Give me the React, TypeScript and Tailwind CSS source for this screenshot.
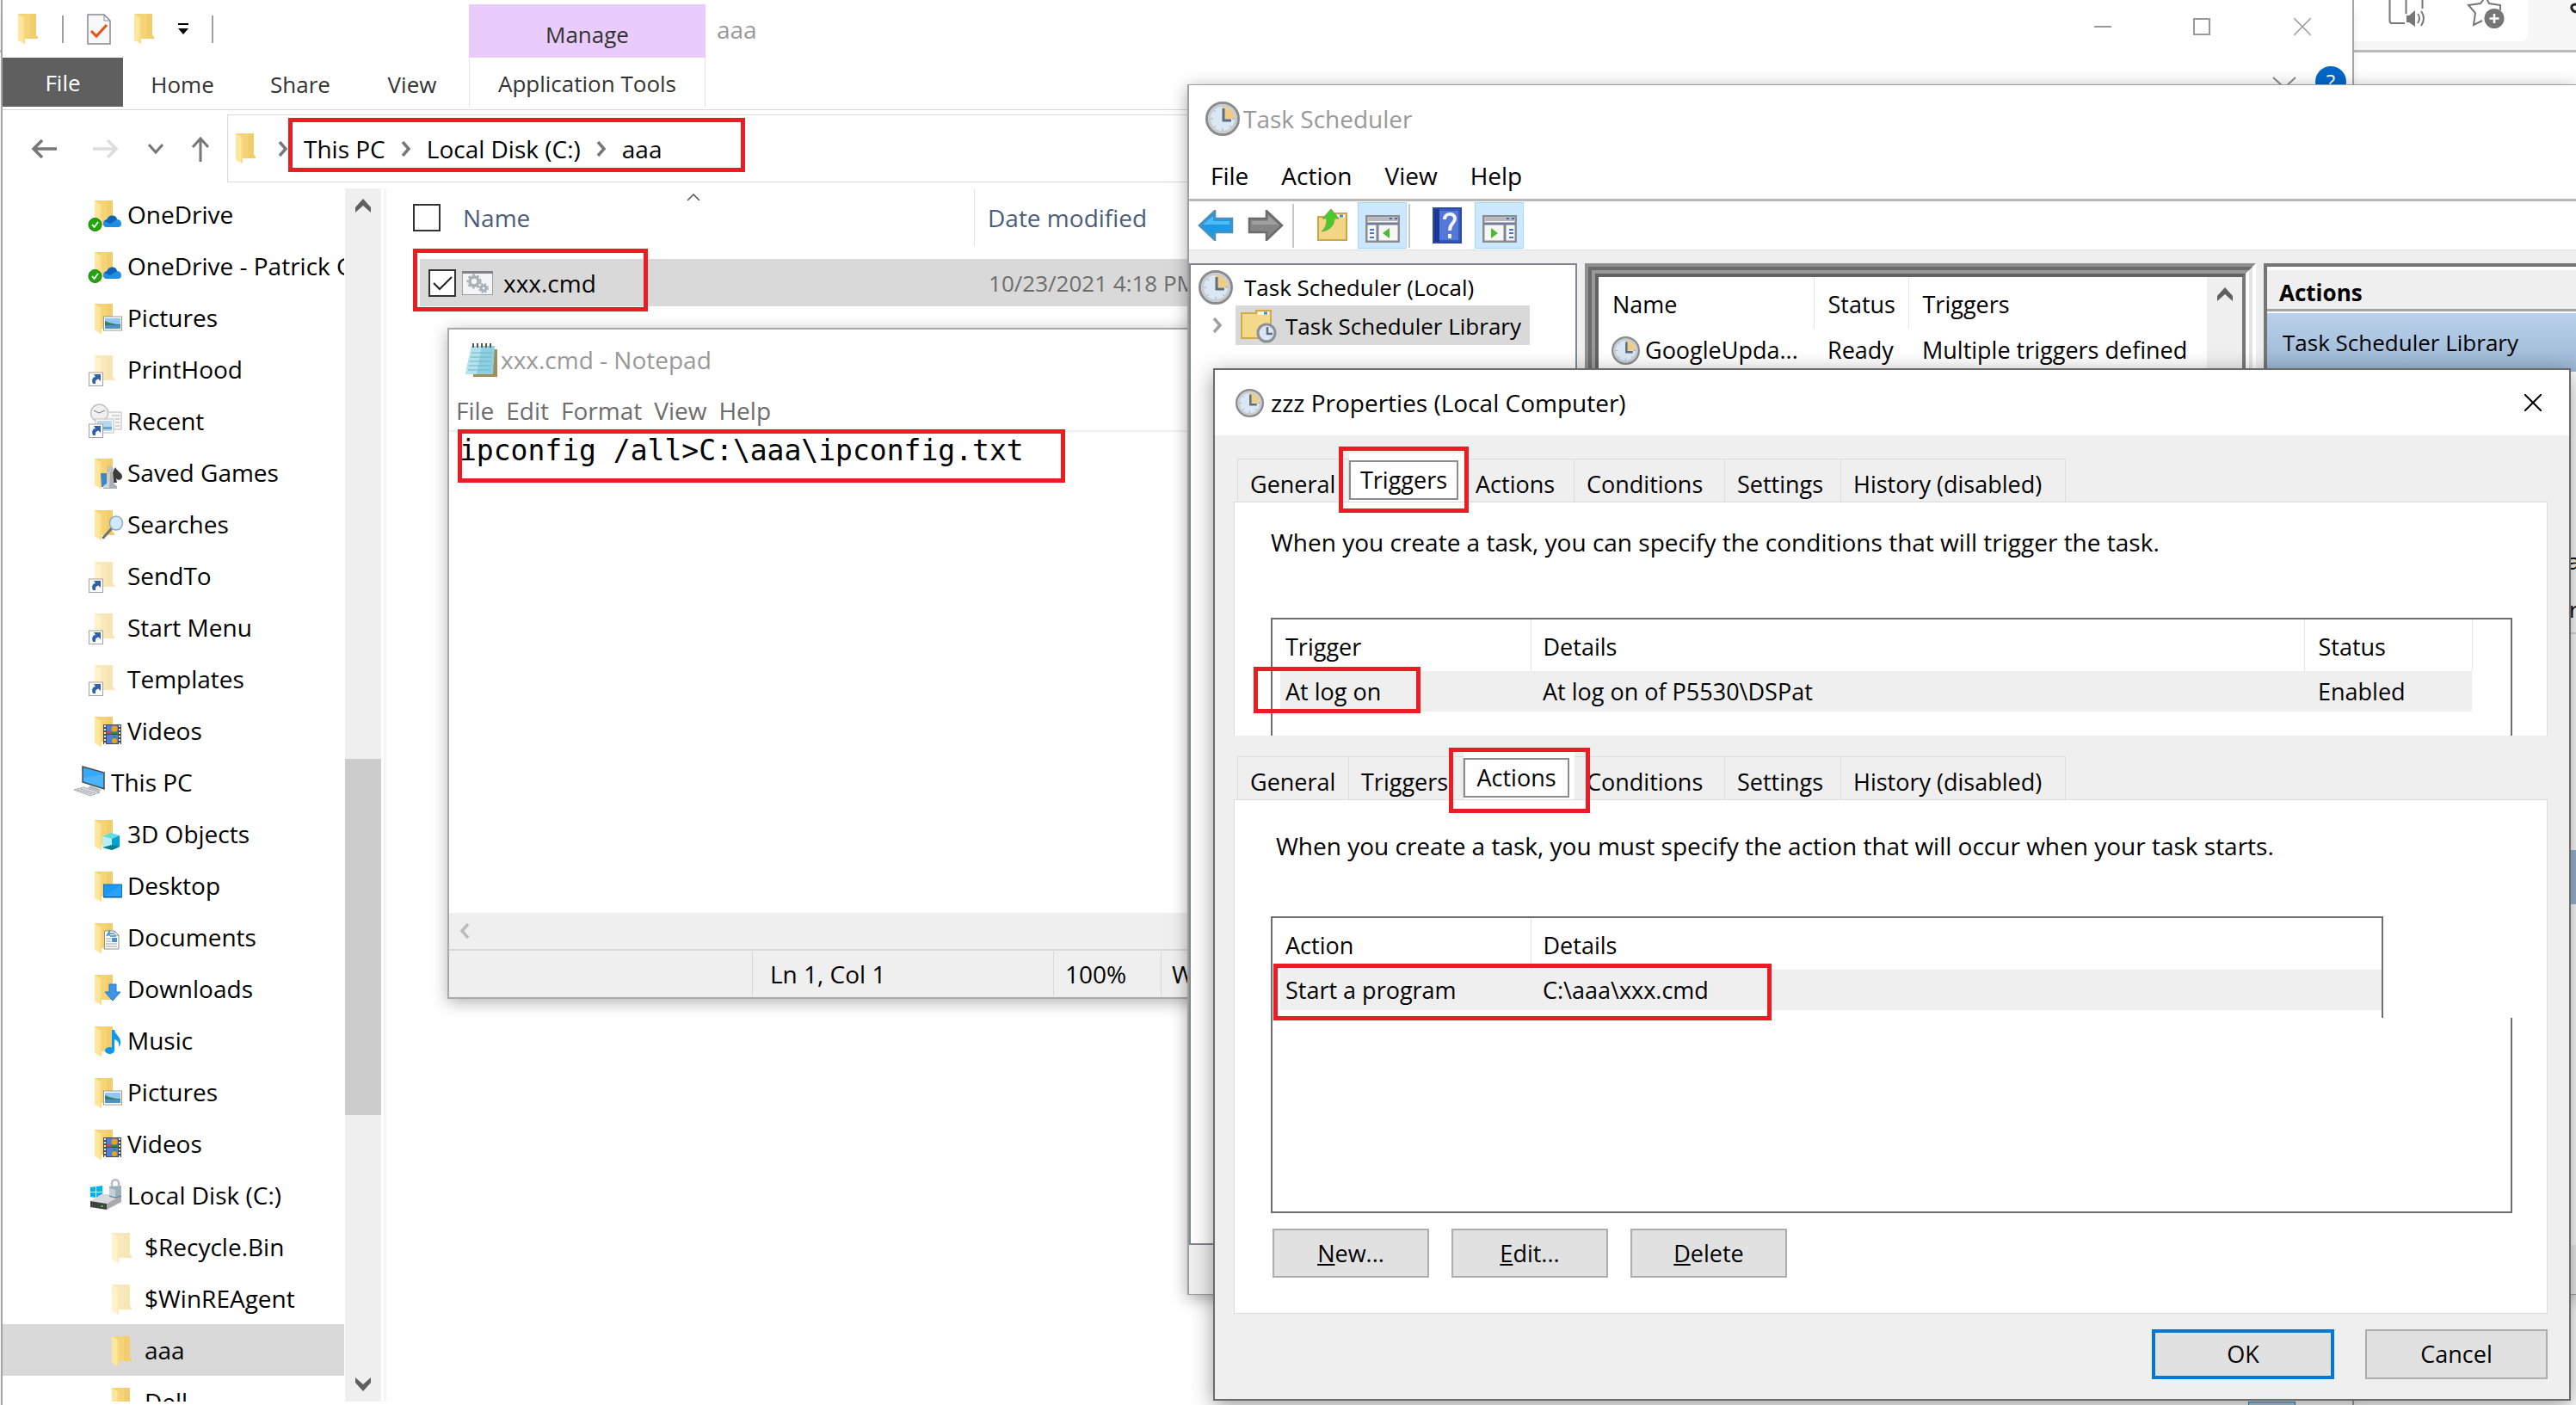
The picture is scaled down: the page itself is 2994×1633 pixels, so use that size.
import { useState, type ReactNode } from "react";

type NavItem = {
  id: string;
  label: string;
  icon: string;
  level: 0 | 1 | 2;
};

const navItems: NavItem[] = [
  { id: "onedrive", label: "OneDrive", icon: "onedrive", level: 1 },
  { id: "onedrive-work", label: "OneDrive - Patrick G", icon: "onedrive", level: 1 },
  { id: "pictures", label: "Pictures", icon: "pictures", level: 1 },
  { id: "printhood", label: "PrintHood", icon: "link", level: 1 },
  { id: "recent", label: "Recent", icon: "recent", level: 1 },
  { id: "saved-games", label: "Saved Games", icon: "games", level: 1 },
  { id: "searches", label: "Searches", icon: "searches", level: 1 },
  { id: "sendto", label: "SendTo", icon: "link", level: 1 },
  { id: "start-menu", label: "Start Menu", icon: "link", level: 1 },
  { id: "templates", label: "Templates", icon: "link", level: 1 },
  { id: "videos", label: "Videos", icon: "videos", level: 1 },
  { id: "this-pc", label: "This PC", icon: "pc", level: 0 },
  { id: "pc-3d", label: "3D Objects", icon: "cube", level: 1 },
  { id: "pc-desktop", label: "Desktop", icon: "desktop", level: 1 },
  { id: "pc-documents", label: "Documents", icon: "documents", level: 1 },
  { id: "pc-downloads", label: "Downloads", icon: "downloads", level: 1 },
  { id: "pc-music", label: "Music", icon: "music", level: 1 },
  { id: "pc-pictures", label: "Pictures", icon: "pictures", level: 1 },
  { id: "pc-videos", label: "Videos", icon: "videos", level: 1 },
  { id: "disk-c", label: "Local Disk (C:)", icon: "disk", level: 1 },
  { id: "recycle", label: "$Recycle.Bin", icon: "faded", level: 2 },
  { id: "winre", label: "$WinREAgent", icon: "faded", level: 2 },
  { id: "aaa", label: "aaa", icon: "folder", level: 2 },
  { id: "dell", label: "Dell", icon: "folder", level: 2 },
];

const levelPadding = {
  0: "pl-[82px]",
  1: "pl-[101px]",
  2: "pl-[121px]",
};

const tabs = [
  { label: "General", width: "w-[130px]" },
  { label: "Triggers", width: "w-[133px]" },
  { label: "Actions", width: "w-[129px]" },
  { label: "Conditions", width: "w-[175px]" },
  { label: "Settings", width: "w-[135px]" },
  { label: "History (disabled)", width: "w-[261px]" },
];

// Callouts drawn over the windows
const callouts = [
  "left-[335px] top-[137px] h-[63px] w-[531px]",
  "left-[480px] top-[289px] h-[73px] w-[273px]",
  "left-[532px] top-[499px] h-[62px] w-[706px]",
  "left-[1556px] top-[519px] h-[77px] w-[151px]",
  "left-[1457px] top-[775px] h-[54px] w-[194px]",
  "left-[1684px] top-[869px] h-[76px] w-[164px]",
  "left-[1480px] top-[1120px] h-[66px] w-[579px]",
];

function FolderShape({ faded = false }: { faded?: boolean }) {
  return (
    <g opacity={faded ? 0.5 : 1}>
      <path d="M6 4H27V29L29 31V33H14L6 35Z" fill="#f5d478" />
      <path d="M20 4H27V29L29 31V33H20Z" fill="#efc962" opacity="0.6" />
      <path d="M6 4L14 9V39L6 35Z" fill="#ffe69d" />
      <path d="M12 8L14 9V39L12 38Z" fill="#fbdc84" />
    </g>
  );
}

function ShortcutBadge() {
  return (
    <g>
      <rect x="-0.5" y="24" width="16" height="15.5" fill="#fff" stroke="#a3a3a3" />
      <path d="M4 37C2 32 4 29 7 29L5 26H13V34L10.500 31.500C7.500 32 6.500 34 7 37Z" fill="#2f62a8" />
    </g>
  );
}

function SmallFolder() {
  return (
    <svg viewBox="6 4 24 35" className="h-[35px] w-6 shrink-0">
      <FolderShape />
    </svg>
  );
}

function NavIcon({ icon }: { icon: string }) {
  const plain = ["pc", "disk", "recent"].includes(icon);
  return (
    <svg viewBox="0 0 40 40" className="h-10 w-10 shrink-0 overflow-visible">
      {!plain && <FolderShape faded={icon === "link" || icon === "faded"} />}
      {icon === "onedrive" && (
        <g>
          <path
            d="M16 31C16 27 19 26 21 26C22 21 30 20 32 26C36 26 37 29 37 31C37 34 35 35 33 35H20C17 35 16 33 16 31Z"
            fill="#1f8fe6"
          />
          <path d="M20 26.500C22 20 31 20 32 26L24 31L17 28Z" fill="#0f63b8" />
          <circle cx="6.500" cy="32" r="7.500" fill="#22a40f" stroke="#178207" />
          <path d="M3 32L5.500 35L10 29" stroke="#fff" strokeWidth="1.800" fill="none" />
        </g>
      )}
      {icon === "link" && <ShortcutBadge />}
      {icon === "pictures" && (
        <g>
          <rect x="16.500" y="19" width="21" height="16" fill="#fff" stroke="#9a9a9a" />
          <rect x="18" y="21" width="18" height="12" fill="#8ec7f5" />
          <path d="M18 24C23 26 28 28 36 28V30H18Z" fill="#3b7d6a" />
          <rect x="18" y="29" width="18" height="4" fill="#4f93c5" />
        </g>
      )}
      {icon === "recent" && (
        <g>
          <rect x="19" y="10" width="18" height="20" fill="#f7f7f7" stroke="#bdbdbd" />
          <path d="M26 14H35M30 18H35M30 22H35M30 26H35" stroke="#b0b0b0" />
          <circle cx="11.500" cy="11" r="10" fill="#f0f0f0" stroke="#c2c2c2" strokeWidth="1.500" />
          <path d="M5 8L11 11L18 8" stroke="#777" fill="none" />
          <rect x="7" y="18" width="21" height="16" fill="#fff" stroke="#bdbdbd" />
          <rect x="9" y="20" width="17" height="12" fill="#b9d9f2" />
          <rect x="9" y="27" width="17" height="3" fill="#6fa5cf" />
          <ShortcutBadge />
        </g>
      )}
      {icon === "games" && (
        <g>
          <path d="M13 21H20V37H14Z" fill="#3e86cc" />
          <path d="M30 14C33 20 38 20 38 25C38 29 33 30 31 27L32 32H28L27 20Z" fill="#3c3c3c" />
          <circle cx="24" cy="17" r="4" fill="#b9c1c7" />
          <path d="M22 20H26L28 33L32 36V39H16V36L20 33Z" fill="#a4afb6" />
          <path d="M22 20H24L23 38H16V36L20 33Z" fill="#cfd6da" />
        </g>
      )}
      {icon === "searches" && (
        <g>
          <path d="M16 36L25 26" stroke="#6d7378" strokeWidth="3" strokeLinecap="round" />
          <ellipse cx="31" cy="19" rx="7.500" ry="8" fill="#cfeafc" stroke="#8fa9bb" strokeWidth="1.500" />
        </g>
      )}
      {icon === "videos" && (
        <g>
          <rect x="16" y="13" width="21" height="23" fill="#4a4a4a" />
          <path d="M18 14V36M35 14V36" stroke="#e8e8e8" strokeWidth="2" strokeDasharray="2 2" />
          <rect x="20" y="14" width="13" height="10" fill="#4d7ee0" />
          <rect x="20" y="25" width="13" height="10" fill="#4d7ee0" />
          <path d="M20 22H33V24H20ZM28 25L31 28L28 31Z" fill="#2e8b35" />
          <circle cx="29" cy="18" r="3.500" fill="#e8a50f" />
          <circle cx="29" cy="32" r="3" fill="#e8a50f" />
          <circle cx="23" cy="22" r="2" fill="#e23b52" />
        </g>
      )}
      {icon === "pc" && (
        <g>
          <path d="M11 2L36 9V28L11 20Z" fill="#35a8fa" stroke="#4b4b4b" strokeWidth="1.500" />
          <path d="M12 15L35 11V26L12 19Z" fill="#5bbcff" opacity="0.6" />
          <path d="M20 24L33 29L30 31L17 27Z" fill="#b5bbc0" />
          <path d="M1 29L12 26L31 32L20 36Z" fill="#dfe2e5" stroke="#a7adb2" />
          <path d="M5 29L22 34M9 28L26 33" stroke="#8b9196" strokeDasharray="2 1" />
        </g>
      )}
      {icon === "cube" && (
        <g>
          <path d="M15 23L25 19L35 22L26 26Z" fill="#5fdbe4" />
          <path d="M15 23L26 26V39L15 36Z" fill="#b9eff2" />
          <path d="M35 22L26 26V39L35 35Z" fill="#00a3d9" />
          <path d="M15 36L26 33L35 35L26 39Z" fill="#057f8d" />
        </g>
      )}
      {icon === "desktop" && (
        <g>
          <rect x="16.500" y="19" width="21" height="15" fill="#1b98f5" stroke="#1573bd" />
          <path d="M17 33L37 19V34H17Z" fill="#39aaff" opacity="0.5" />
          <path d="M17 33.500H37" stroke="#0b4f8c" />
        </g>
      )}
      {icon === "documents" && (
        <g>
          <path d="M17.500 13H29L34 18V34H17.500Z" fill="#fff" stroke="#8f8f8f" />
          <path d="M29 13V18H34" fill="none" stroke="#8f8f8f" />
          <path d="M20 19L23 14V19M24 16H28M24 19H31" stroke="#2e8ed1" strokeWidth="1.500" fill="none" />
          <path d="M19 22H25M19 25H25M19 28H32M19 31H32" stroke="#9b9b9b" />
          <rect x="26" y="21" width="6" height="5" fill="#4f93c5" />
        </g>
      )}
      {icon === "downloads" && (
        <path d="M23 15H31V24H36L27 34L18 24H23Z" fill="#3d95e8" stroke="#2877c4" />
      )}
      {icon === "music" && (
        <g>
          <path d="M26 8H29C30 14 37 16 36 24C35 27 34 28 34 28C35 22 32 20 29 19V32H26Z" fill="#0b98f3" />
          <ellipse cx="23.500" cy="32" rx="5.500" ry="4" fill="#0b98f3" />
        </g>
      )}
      {icon === "disk" && (
        <g>
          <path d="M1 11L7 10V16H1ZM8 10L15 9V16H8ZM1 17H7V23L1 22ZM8 17H15V24L8 23Z" fill="#00b4f1" />
          <path d="M1 27L14 19H37L20 30Z" fill="#d9dadb" />
          <path d="M1 27L20 30V37L1 34Z" fill="#3f4244" />
          <path d="M20 30L37 20V28L20 37Z" fill="#a8abad" />
          <path d="M13 33H16" stroke="#36c326" strokeWidth="2" />
          <path d="M26 11V6C26 1 34 1 34 6V9" stroke="#b5bdc3" strokeWidth="2.500" fill="none" />
          <path d="M23 10L37 9V22L30 24L23 22Z" fill="#9fb0bb" />
          <path d="M23 12L30 14V24L23 22Z" fill="#c5d1d9" />
          <path d="M23 21L30 23L37 21" stroke="#3e7da8" fill="none" />
        </g>
      )}
    </svg>
  );
}

function ClockIcon({ className }: { className: string }) {
  return (
    <svg viewBox="0 0 40 40" className={className}>
      <circle cx="20" cy="20" r="18.500" fill="#dbe8f4" stroke="#8b8b8b" strokeWidth="3" />
      <circle cx="20" cy="20" r="15.500" fill="none" stroke="#c9cdd1" strokeWidth="3" />
      <path d="M20 20V6A14 14 0 0 1 34 20Z" fill="#f0cd86" />
      <path d="M20 34V31M6 20H9M31 20H34M10 10L12 12M10 30L12 28M30 30L28 28" stroke="#9aa9b8" />
      <path d="M21 8V22H30" fill="none" stroke="#5c6e82" strokeWidth="3" />
    </svg>
  );
}

function Chevron({ className }: { className: string }) {
  return (
    <svg viewBox="0 0 12 18" className={className} fill="none" stroke="currentColor" strokeWidth="3.500">
      <path d="M2 1L9 9L2 17" />
    </svg>
  );
}

function ScrollArrow({ down = false }: { down?: boolean }) {
  return (
    <svg viewBox="0 0 18 16" className="h-4 w-[18px] fill-[#606060]">
      {down ? <path d="M0 0L9 8L18 0V6L9 16L0 6Z" /> : <path d="M0 16L9 8L18 16V10L9 0L0 10Z" />}
    </svg>
  );
}

function CheckBox({ label, checked, onToggle }: { label: string; checked: boolean; onToggle: () => void }) {
  return (
    <span className="grid h-8 w-8 shrink-0">
      <input
        type="checkbox"
        aria-label={label}
        checked={checked}
        onChange={onToggle}
        className="col-start-1 row-start-1 h-8 w-8 appearance-none border-2 border-[#333] bg-white"
      />
      {checked && (
        <svg viewBox="0 0 32 32" className="pointer-events-none col-start-1 row-start-1 h-8 w-8" fill="none">
          <path d="M6 16L13 23L27 9" stroke="#222" strokeWidth="2" />
        </svg>
      )}
    </span>
  );
}

function BrowserBackdrop() {
  return (
    <div className="flex min-h-screen flex-col bg-white">
      <div className="flex h-[61px] justify-end border-b-[3px] border-[#bbb] bg-[#f7f7f7]">
        <div className="flex h-12 w-[300px] justify-end gap-[47px] rounded-br-lg bg-white pr-[27px]">
          <svg viewBox="0 0 44 33" className="h-[33px] w-11" fill="none" stroke="#767676" strokeWidth="2">
            <path d="M1.500 0V24Q1.500 27 4 27H19M20.500 0V16M39.500 0V10" />
            <path d="M21 18H24L31 12V31L24 26H21Z" fill="#767676" stroke="none" />
            <path d="M34 16Q38 21 34 27M38 13Q44 21 38 30" />
          </svg>
          <svg viewBox="0 0 44 33" className="h-[33px] w-11" fill="none" stroke="#767676" strokeWidth="2">
            <path d="M39 12V6L26 4L22 -4L16 4L2 6L10 15L8 29L18 24" />
            <circle cx="32" cy="21.500" r="11.500" fill="#767676" stroke="none" />
            <path d="M32 16V27M26.500 21.500H37.500" stroke="#fff" strokeWidth="2.500" />
          </svg>
        </div>
        <div className="w-14">
          <svg viewBox="0 0 56 20" className="h-5 w-14" fill="none" stroke="#222" strokeWidth="3">
            <path d="M56 5Q50 5 51 10Q52 13 56 14" />
          </svg>
        </div>
      </div>
    </div>
  );
}

function ExplorerWindow() {
  const [selectedId, setSelectedId] = useState("aaa");
  const [allChecked, setAllChecked] = useState(false);
  const [fileChecked, setFileChecked] = useState(true);

  return (
    <section className="absolute inset-y-0 left-px right-[258px] flex flex-col border-x-2 border-[#a5a5a5] bg-white shadow-lg">
      <header className="flex h-[67px] shrink-0 text-[26px]">
        <div className="flex w-[542px] items-center gap-[27px] pl-[18px]">
          <SmallFolder />
          <span className="h-8 w-0.5 bg-[#a0a0a0]" />
          <svg viewBox="0 0 28 36" className="h-9 w-7">
            <path d="M1 1H20L27 8V35H1Z" fill="#f8f8fa" stroke="#8a8a8a" strokeWidth="1.500" />
            <path d="M20 1V8H27" fill="none" stroke="#8a8a8a" />
            <path d="M5 20L11 26L23 13" fill="none" stroke="#f0500f" strokeWidth="3" />
          </svg>
          <SmallFolder />
          <svg viewBox="0 0 12 14" className="h-3.5 w-3">
            <path d="M0 0H12V2H0ZM0 6H12L6 13Z" />
          </svg>
          <span className="h-8 w-0.5 bg-[#a0a0a0]" />
        </div>
        <div className="mt-[5px] flex w-[275px] items-center justify-center bg-[#e9cbfc] pt-2 text-[#333]">
          Manage
        </div>
        <h1 className="flex flex-1 items-center pl-[13px] text-[28px] text-[#999]">aaa</h1>
        <div className="flex items-start pr-12 pt-[21px]">
          <button aria-label="Minimize" className="w-[115px]">
            <svg viewBox="0 0 20 20" className="h-5 w-5" stroke="#999" strokeWidth="2">
              <path d="M0 10H20" />
            </svg>
          </button>
          <button aria-label="Maximize" className="w-[117px]">
            <svg viewBox="0 0 20 20" className="h-5 w-5" fill="none" stroke="#999" strokeWidth="2">
              <path d="M1 1H19V19H1Z" />
            </svg>
          </button>
          <button aria-label="Close">
            <svg viewBox="0 0 20 20" className="h-5 w-5" stroke="#999" strokeWidth="1.500">
              <path d="M0 0L20 20M20 0L0 20" />
            </svg>
          </button>
        </div>
      </header>

      <div className="flex h-[61px] shrink-0 border-b border-[#d9d9d9] text-[26px] text-[#333]">
        <button className="h-[57px] w-[140px] bg-[#5f5f5f] text-white">File</button>
        <button className="w-[138px] pt-0.5">Home</button>
        <button className="w-[136px] pt-0.5">Share</button>
        <button className="w-32 pr-1 pt-0.5">View</button>
        <button className="h-[58px] w-[275px] border-x border-[#e4e4e4] pt-0.5">Application Tools</button>
        <div className="flex flex-1 items-start justify-end gap-[22px] pr-[7px] pt-[10px]">
          <svg viewBox="0 0 28 14" className="mt-3 h-3.5 w-7" fill="none" stroke="#888" strokeWidth="2">
            <path d="M1 1L14 13L27 1" />
          </svg>
          <span className="flex h-9 w-9 items-center justify-center rounded-full bg-[#0067c8] text-2xl text-white">
            ?
          </span>
        </div>
      </div>

      <div className="flex h-[91px] shrink-0 items-start pl-[33px] pt-[5px]">
        <div className="flex h-[80px] items-center text-[#777]">
          <button aria-label="Back" className="w-[72px]">
            <svg viewBox="0 0 30 24" className="h-6 w-[30px]" fill="none" stroke="currentColor" strokeWidth="3.500">
              <path d="M30 12H3M13 2L3 12L13 22" />
            </svg>
          </button>
          <button aria-label="Forward" className="w-16 text-[#ddd]">
            <svg viewBox="0 0 30 24" className="h-6 w-[30px]" fill="none" stroke="currentColor" strokeWidth="3.500">
              <path d="M0 12H27M17 2L27 12L17 22" />
            </svg>
          </button>
          <button aria-label="Recent locations" className="w-[50px]">
            <svg viewBox="0 0 18 12" className="h-3 w-[18px]" fill="none" stroke="currentColor" strokeWidth="3">
              <path d="M1 1L9 10L17 1" />
            </svg>
          </button>
          <button aria-label="Up" className="w-[42px]">
            <svg viewBox="0 0 22 30" className="h-[30px] w-[22px]" fill="none" stroke="currentColor" strokeWidth="3">
              <path d="M11 30V3M2 13L11 3L20 13" />
            </svg>
          </button>
        </div>
        <div className="flex h-[79px] flex-1 items-center border border-[#d9d9d9] pl-[9px]">
          <SmallFolder />
          <Chevron className="ml-[25px] h-[18px] w-3 text-[#777]" />
          <a href="#this-pc" className="ml-[18px]">This PC</a>
          <Chevron className="ml-[18px] h-[18px] w-3 text-[#777]" />
          <a href="#disk-c" className="ml-[18px]">Local Disk (C:)</a>
          <Chevron className="ml-[18px] h-[18px] w-3 text-[#777]" />
          <a href="#aaa" className="ml-[18px]">aaa</a>
        </div>
      </div>

      <div className="flex min-h-0 flex-1 overflow-hidden">
        <nav className="w-[397px] shrink-0 overflow-hidden">
          {navItems.map((item) => (
            <button
              key={item.id}
              className={`flex h-[60px] w-full items-center gap-1 overflow-hidden whitespace-nowrap text-left ${levelPadding[item.level]} ${item.id === selectedId ? "bg-[#d9d9d9]" : ""}`}
              onClick={() => setSelectedId(item.id)}
            >
              <NavIcon icon={item.icon} />
              <span>{item.label}</span>
            </button>
          ))}
        </nav>
        <div className="ml-px flex w-[42px] shrink-0 flex-col items-center bg-[#efefef] py-3">
          <ScrollArrow />
          <div className="mt-[635px] h-[414px] w-full bg-[#ccc]" />
          <div className="mt-auto">
            <ScrollArrow down />
          </div>
        </div>
        <div className="ml-[3px] w-[3px] shrink-0 bg-[#f5f5f5]" />
        <main className="min-w-0 flex-1 pl-[31px]">
          <table className="w-full table-fixed text-left">
            <colgroup>
              <col className="w-2" />
              <col className="w-[645px]" />
              <col />
            </colgroup>
            <thead>
              <tr className="h-[82px] align-top text-[#4a5d7c]">
                <th colSpan={2} className="p-0 font-normal">
                  <div className="relative flex h-[67px] items-center gap-[26px] border-r border-[#e5e5e5]">
                    <CheckBox label="Select all" checked={allChecked} onToggle={() => setAllChecked(!allChecked)} />
                    Name
                    <svg
                      viewBox="0 0 16 8"
                      className="absolute left-[318px] top-1.5 h-2 w-4"
                      fill="none"
                      stroke="#555"
                      strokeWidth="1.500"
                    >
                      <path d="M1 8L8 1L15 8" />
                    </svg>
                  </div>
                </th>
                <th className="p-0 font-normal">
                  <div className="flex h-[67px] items-center pl-[15px]">Date modified</div>
                </th>
              </tr>
            </thead>
            <tbody>
              <tr className="h-[55px]">
                <td className="p-0" />
                <td className="bg-[#d9d9d9] p-0">
                  <div className="flex items-center pl-2.5">
                    <CheckBox label="Select xxx.cmd" checked={fileChecked} onToggle={() => setFileChecked(!fileChecked)} />
                    <svg viewBox="0 0 36 28" className="ml-[7px] h-7 w-9">
                      <rect x="0.500" y="0.500" width="35" height="27" fill="#f4f5f6" stroke="#9b9fa3" />
                      <path d="M0 0H36V3H0Z" fill="#7f8488" />
                      <circle cx="14" cy="12" r="5" fill="none" stroke="#a7b0b6" strokeWidth="3.500" />
                      <circle cx="14" cy="12" r="7.500" fill="none" stroke="#a7b0b6" strokeWidth="2" strokeDasharray="3 2.500" />
                      <circle cx="25" cy="20" r="3" fill="none" stroke="#a7b0b6" strokeWidth="3" />
                      <circle cx="25" cy="20" r="5" fill="none" stroke="#a7b0b6" strokeWidth="2" strokeDasharray="2 2" />
                    </svg>
                    <span className="ml-3">xxx.cmd</span>
                  </div>
                </td>
                <td className="bg-[#d9d9d9] p-0 pl-4 text-[26px] text-[#6d6d6d]">10/23/2021 4:18 PM</td>
              </tr>
            </tbody>
          </table>
        </main>
      </div>
      <footer className="flex h-1 shrink-0 justify-end bg-white pr-[66px]">
        <span className="w-[55px] border-x border-t border-[#1f86b8] bg-[#b4d3e2]" />
      </footer>
    </section>
  );
}

function NotepadWindow() {
  return (
    <section className="absolute left-[520px] top-[381px] flex h-[780px] w-[1000px] flex-col border-2 border-[#a8a8a8] bg-white shadow-[0_4px_18px_rgba(0,0,0,0.3)]">
      <header className="flex h-[70px] shrink-0 items-center gap-1 pl-[18px] text-[#999]">
        <svg viewBox="0 0 38 40" className="h-10 w-[38px]">
          <path d="M10 8H38V40H10Z" fill="#a08d5c" />
          <path d="M8 4H35L33 37H1Z" fill="#8fd0e0" />
          <path d="M8 4H20L14 37H1Z" fill="#b4e3ee" />
          <path d="M8 12H32M7 17H31M6 22H31M5 27H30M4 32H30" stroke="#69b4c8" />
          <path d="M10 1V6M15 1V6M20 1V6M25 1V6M30 1V6" stroke="#555" strokeWidth="2" />
        </svg>
        xxx.cmd - Notepad
      </header>
      <nav className="flex h-[49px] shrink-0 items-center gap-3.5 border-b-2 border-[#f0f0f0] pl-2 text-[#6d6d6d]">
        <button>File</button>
        <button>Edit</button>
        <button>Format</button>
        <button>View</button>
        <button>Help</button>
      </nav>
      <textarea
        aria-label="Text editor"
        defaultValue="ipconfig /all>C:\aaa\ipconfig.txt"
        spellCheck={false}
        className="min-h-0 flex-1 resize-none overflow-hidden pl-3 pt-0.5 font-['DejaVu_Sans_Mono',monospace] text-[33px] leading-10 outline-none"
      />
      <div className="flex h-[42px] shrink-0 items-center bg-[#efefef] pl-3 text-[#bbb]">
        <Chevron className="h-[18px] w-3 rotate-180" />
      </div>
      <footer className="flex h-14 shrink-0 items-center border-t-2 border-[#d7d7d7] bg-[#efefef]">
        <span className="w-[352px]" />
        <span className="flex h-[52px] w-[350px] items-center border-l border-[#d7d7d7] pl-5">Ln 1, Col 1</span>
        <span className="flex h-[52px] w-[125px] items-center border-l border-[#d7d7d7] pl-[13px]">100%</span>
        <span className="flex h-[52px] items-center border-l border-[#d7d7d7] pl-3">W</span>
      </footer>
    </section>
  );
}

function PaneToggleIcon({ flipped = false }: { flipped?: boolean }) {
  return (
    <svg viewBox="0 0 40 32" className="h-8 w-10">
      <rect x="1" y="1" width="38" height="30" fill="#f7f7f7" stroke="#8b8b90" strokeWidth="3" />
      <path d="M2 5H38" stroke="#b4b9c2" strokeWidth="4" />
      <path d="M2 10H38" stroke="#6f7a93" strokeWidth="3" />
      <path d="M28 4H31M34 4H37" stroke="#4a66a0" strokeWidth="2" />
      {flipped ? (
        <g>
          <path d="M26 10V30" stroke="#7d8697" strokeWidth="3" />
          <path d="M31 17H36M31 21H36M31 26H36" stroke="#3c7ad0" strokeWidth="2" />
          <path d="M10 15L18 21L10 27Z" fill="#4dbb2e" />
        </g>
      ) : (
        <g>
          <path d="M14 10V30" stroke="#7d8697" strokeWidth="3" />
          <path d="M5 17H10M5 21H10M5 26H10" stroke="#3c7ad0" strokeWidth="2" />
          <path d="M28 15L20 21L28 27Z" fill="#4dbb2e" />
        </g>
      )}
    </svg>
  );
}

function SchedulerWindow() {
  return (
    <section className="absolute bottom-[128px] left-[1380px] right-0 top-[98px] flex flex-col overflow-hidden border-y border-l-2 border-[#9f9f9f] bg-[#efefef] shadow-[0_4px_18px_rgba(0,0,0,0.35)]">
      <header className="flex h-[78px] shrink-0 items-center gap-1 bg-white pl-[19px] text-[#999]">
        <ClockIcon className="h-10 w-10" />
        Task Scheduler
      </header>
      <nav className="flex h-[57px] shrink-0 items-center gap-[38px] border-b-[3px] border-[#b8b8b8] bg-white pl-[25px]">
        <button>File</button>
        <button>Action</button>
        <button>View</button>
        <button>Help</button>
      </nav>
      <div className="flex h-[57px] shrink-0 items-center border-b border-[#e0e0e0] bg-white pl-2.5">
        <button aria-label="Back">
          <svg viewBox="0 0 42 36" className="h-9 w-[42px]">
            <path d="M20 1V10H40V26H20V35L2 18Z" fill="#1a9be8" stroke="#4d90b8" strokeWidth="2.500" />
            <path d="M18 7V13H37V17H6Z" fill="#4fbcf8" />
          </svg>
        </button>
        <button aria-label="Forward" className="ml-4">
          <svg viewBox="0 0 42 36" className="h-9 w-[42px]">
            <path d="M22 1V10H2V26H22V35L40 18Z" fill="#858585" stroke="#6b6b6b" strokeWidth="2.500" />
            <path d="M24 7V13H5V17H36Z" fill="#a0a0a0" />
          </svg>
        </button>
        <span className="ml-2.5 h-[51px] w-0.5 bg-[#c8c8c8]" />
        <button aria-label="Up one level" className="ml-[26px]">
          <svg viewBox="0 0 38 38" className="h-[38px] w-[38px]">
            <path d="M2 9H22V5H35V36H2Z" fill="#f3d685" stroke="#cfa54a" strokeWidth="2" />
            <path d="M24 8H33" stroke="#fff" strokeWidth="3" />
            <path d="M27 8H31" stroke="#3d8ee0" strokeWidth="3" />
            <path d="M6 26C11 22 12 17 12 11H7L17 0L26 11H21C21 18 16 25 6 26Z" fill="#4cc72d" stroke="#6fae4a" />
          </svg>
        </button>
        <button
          aria-label="Show or hide console tree"
          className="ml-2.5 flex h-[54px] w-[57px] items-center justify-center border border-[#a6d8ff] bg-[#cce8ff] pt-2"
        >
          <PaneToggleIcon />
        </button>
        <span className="ml-0.5 h-[51px] w-0.5 bg-[#c8c8c8]" />
        <button aria-label="Help" className="ml-[26px]">
          <svg viewBox="0 0 34 42" className="h-[42px] w-[34px]">
            <rect x="1" y="1" width="32" height="40" fill="#3457c0" stroke="#2a4aa8" strokeWidth="2" />
            <path d="M2 2H8V40H2Z" fill="#1d3796" />
            <rect x="8" y="4" width="22" height="34" fill="#5478d8" />
            <path
              d="M14 14C14 6 26 6 26 13C26 19 20 18 20 27M20 31V36"
              fill="none"
              stroke="#f2f4fb"
              strokeWidth="4"
            />
          </svg>
        </button>
        <button
          aria-label="Show or hide action pane"
          className="ml-[15px] flex h-[54px] w-[57px] items-center justify-center border border-[#a6d8ff] bg-[#cce8ff] pt-2"
        >
          <PaneToggleIcon flipped />
        </button>
      </div>

      <div className="flex min-h-0 flex-1 pb-[57px] pt-[15px] text-[27px]">
        <aside className="w-[451px] shrink-0 border-2 border-[#82878f] bg-white text-[26px]">
          <button className="flex h-[47px] items-center gap-[13px] pl-[9px] pt-1">
            <ClockIcon className="h-10 w-10" />
            Task Scheduler (Local)
          </button>
          <div className="flex h-[46px] items-center">
            <Chevron className="ml-[25px] h-[18px] w-3 text-[#a0a0a0]" />
            <button className="ml-[15px] flex h-[46px] items-center gap-2.5 bg-[#d9d9d9] pl-1.5 pr-2.5 pt-0.5">
              <svg viewBox="0 0 42 40" className="h-10 w-[42px]">
                <path d="M1 5H18V2H35V34H1Z" fill="#f4d98a" stroke="#d0a94b" strokeWidth="2" />
                <path d="M20 5H33" stroke="#fff" strokeWidth="3" />
                <path d="M27 5H31" stroke="#3d8ee0" strokeWidth="3" />
                <circle cx="30" cy="28" r="10" fill="#dbe8f4" stroke="#8a9095" strokeWidth="3" />
                <path d="M31 21V29H37" fill="none" stroke="#5c6e82" strokeWidth="2.500" />
              </svg>
              Task Scheduler Library
            </button>
          </div>
        </aside>

        <Bevel>
          <div className="flex h-full bg-white">
            <div className="min-w-0 flex-1">
              <table className="w-full table-fixed text-left">
                <colgroup>
                  <col className="w-[250px]" />
                  <col className="w-[110px]" />
                  <col />
                </colgroup>
                <thead>
                  <tr className="h-[60px]">
                    <th className="border-r border-[#e5e5e5] p-0 pl-4 pt-1 font-normal">Name</th>
                    <th className="border-r border-[#e5e5e5] p-0 pl-4 pt-1 font-normal">Status</th>
                    <th className="p-0 pl-4 pt-1 font-normal">Triggers</th>
                  </tr>
                </thead>
                <tbody>
                  <tr className="h-[50px] whitespace-nowrap">
                    <td className="p-0 pl-[15px]">
                      <span className="flex items-center gap-1.5">
                        <ClockIcon className="h-[33px] w-[33px]" />
                        GoogleUpda...
                      </span>
                    </td>
                    <td className="p-0 pl-4">Ready</td>
                    <td className="p-0 pl-4">Multiple triggers defined</td>
                  </tr>
                </tbody>
              </table>
            </div>
            <div className="flex w-[41px] flex-col items-center bg-[#efefef] pt-3">
              <ScrollArrow />
            </div>
          </div>
        </Bevel>

        <aside className="w-[363px] shrink-0 border-l-4 border-t-4 border-[#757575] bg-white text-[26px]">
          <h2 className="mt-1 flex h-12 items-center border-b-[3px] border-[#a5a5a5] bg-[#efefef] pl-3.5 pt-1.5 font-bold">
            Actions
          </h2>
          <div className="mt-0.5 flex h-[68px] items-center bg-gradient-to-b from-[#b9d1ea] to-[#9bb6d4] pl-[18px]">
            Task Scheduler Library
          </div>
          <div className="mt-[191px] flex h-[57px] items-center justify-end overflow-hidden">
            <span className="w-2.5">as</span>
          </div>
          <div className="flex h-[57px] items-center justify-end overflow-hidden border-b-2 border-[#ddd]">
            <span className="w-2">r</span>
          </div>
          <div className="mt-[251px] h-[63px] bg-[#9bb6d4]" />
        </aside>
      </div>
    </section>
  );
}

function Bevel({ children }: { children: ReactNode }) {
  return (
    <div className="mx-[9px] min-w-0 flex-1 border-4 border-l-[#8f8f8f] border-r-white border-t-[#8f8f8f]">
      <div className="h-full border-4 border-l-[#6c6c6c] border-r-[#e3e3e3] border-t-[#6c6c6c]">
        <div className="h-full border-4 border-l-[#999] border-r-white border-t-[#999]">
          <div className="h-full border-4 border-l-[#636363] border-r-[#777] border-t-[#636363]">{children}</div>
        </div>
      </div>
    </div>
  );
}

function TabStrip({ active }: { active: string }) {
  return (
    <div role="tablist" className="flex h-14 items-end pl-[26px]">
      {tabs.map((tab) =>
        tab.label === active ? (
          <button
            key={tab.label}
            role="tab"
            aria-selected="true"
            className={`flex h-14 shrink-0 items-start bg-white pt-2 pr-1.5 ${tab.width}`}
          >
            <span className="flex h-[46px] w-full items-center justify-center whitespace-nowrap border-2 border-[#8c8c8c]">
              {tab.label}
            </span>
          </button>
        ) : (
          <button
            key={tab.label}
            role="tab"
            aria-selected="false"
            className={`flex h-[50px] shrink-0 items-center whitespace-nowrap border-r border-t border-[#dcdcdc] pl-3.5 pt-2 first:border-l ${tab.width}`}
          >
            {tab.label}
          </button>
        ),
      )}
    </div>
  );
}

function PropertiesDialog() {
  return (
    <section className="absolute bottom-[5px] left-[1410px] right-[6px] top-[428px] flex flex-col border-2 border-[#6b6b6b] bg-[#efefef] text-[27px] shadow-[0_6px_24px_rgba(0,0,0,0.4)]">
      <header className="flex h-[76px] shrink-0 items-center gap-2 bg-white pl-6 pr-8 text-[28px]">
        <ClockIcon className="h-[33px] w-[33px]" />
        <h2 className="flex-1">zzz Properties (Local Computer)</h2>
        <button aria-label="Close">
          <svg viewBox="0 0 20 20" className="h-5 w-5" stroke="#000" strokeWidth="2">
            <path d="M0 0L20 20M20 0L0 20" />
          </svg>
        </button>
      </header>

      <div className="flex h-[349px] shrink-0 flex-col pt-[21px]">
        <TabStrip active="Triggers" />
        <div className="ml-[22px] mr-[25px] flex flex-1 flex-col border-x border-t border-[#dcdcdc] bg-white pl-[42px] pr-10 pt-7">
          <p className="text-[28px]">When you create a task, you can specify the conditions that will trigger the task.</p>
          <div className="mt-[70px] flex-1 border-x-2 border-t-2 border-[#6e6e6e]">
            <table className="w-full table-fixed text-left">
              <colgroup>
                <col className="w-[9px]" />
                <col className="w-[291px]" />
                <col />
                <col className="w-[195px]" />
                <col className="w-[45px]" />
              </colgroup>
              <thead>
                <tr className="h-[60px]">
                  <th className="p-0" />
                  <th className="border-r border-[#e5e5e5] p-0 pl-1.5 pt-1 font-normal">Trigger</th>
                  <th className="border-r border-[#e5e5e5] p-0 pl-3.5 pt-1 font-normal">Details</th>
                  <th className="border-r border-[#e5e5e5] p-0 pl-4 pt-1 font-normal">Status</th>
                  <th className="p-0" />
                </tr>
              </thead>
              <tbody>
                <tr className="h-[47px]">
                  <td className="p-0" />
                  <td className="bg-[#efefef] p-0 pl-1.5">At log on</td>
                  <td className="bg-[#efefef] p-0 pl-3.5">At log on of P5530\DSPat</td>
                  <td className="bg-[#efefef] p-0 pl-4">Enabled</td>
                  <td className="p-0" />
                </tr>
              </tbody>
            </table>
          </div>
        </div>
      </div>

      <div className="flex min-h-0 flex-1 flex-col pt-[18px]">
        <TabStrip active="Actions" />
        <div className="ml-[22px] mr-[25px] flex flex-1 flex-col border border-[#dcdcdc] bg-white pb-[41px] pl-[42px] pt-[35px]">
          <p className="pl-1.5 text-[28px]">
            When you create a task, you must specify the action that will occur when your task starts.
          </p>
          <div className="mr-[190px] mt-16 h-[118px] shrink-0 border-x-2 border-t-2 border-[#6e6e6e]">
            <table className="w-full table-fixed text-left">
              <colgroup>
                <col className="w-[9px]" />
                <col className="w-[291px]" />
                <col />
              </colgroup>
              <thead>
                <tr className="h-[60px]">
                  <th className="p-0" />
                  <th className="border-r border-[#e5e5e5] p-0 pl-1.5 pt-1 font-normal">Action</th>
                  <th className="p-0 pl-3.5 pt-1 font-normal">Details</th>
                </tr>
              </thead>
              <tbody>
                <tr className="h-[47px]">
                  <td className="p-0" />
                  <td className="bg-[#efefef] p-0 pl-1.5">Start a program</td>
                  <td className="bg-[#efefef] p-0 pl-3.5">C:\aaa\xxx.cmd</td>
                </tr>
              </tbody>
            </table>
          </div>
          <div className="mr-10 flex-1 border-x-2 border-b-2 border-[#6e6e6e]" />
          <div className="mt-[18px] flex gap-[26px] pl-0.5">
            <button className="h-[57px] w-[182px] border-2 border-[#adadad] bg-[#e1e1e1]">
              <u>N</u>ew...
            </button>
            <button className="h-[57px] w-[182px] border-2 border-[#adadad] bg-[#e1e1e1]">
              <u>E</u>dit...
            </button>
            <button className="h-[57px] w-[182px] border-2 border-[#adadad] bg-[#e1e1e1]">
              <u>D</u>elete
            </button>
          </div>
        </div>
        <footer className="flex h-[99px] shrink-0 items-start justify-end gap-9 pr-[25px] pt-[18px]">
          <button className="h-[58px] w-[212px] border-4 border-[#0078d7] bg-[#e1e1e1]">OK</button>
          <button className="h-[58px] w-[212px] border-2 border-[#adadad] bg-[#e1e1e1]">Cancel</button>
        </footer>
      </div>
    </section>
  );
}

export default function App() {
  return (
    <div className="relative min-h-screen overflow-hidden bg-white font-['Open_Sans','Noto_Sans',sans-serif] text-[28px] leading-9 text-black">
      <BrowserBackdrop />
      <ExplorerWindow />
      <NotepadWindow />
      <SchedulerWindow />
      <PropertiesDialog />
      {callouts.map((box) => (
        <div key={box} className={`pointer-events-none absolute border-[5px] border-[#ed1c24] ${box}`} />
      ))}
    </div>
  );
}
